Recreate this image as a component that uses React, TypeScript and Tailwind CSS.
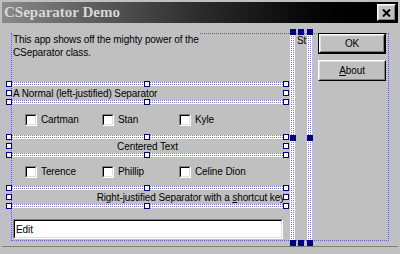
import React from "react";

const hatch = "bg-white bg-[conic-gradient(#7474e0_25%,#ffffff_0)] bg-[length:2px_2px]";

const Handle = ({ className, filled }: { className: string; filled?: boolean }) => (
  <span
    className={`absolute w-[6px] h-[6px] border border-[#000080] ${filled ? "bg-[#000080]" : "bg-white"} ${className}`}
  />
);

const Separator = ({
  justify,
  className,
  children,
}: {
  justify: string;
  className: string;
  children: React.ReactNode;
}) => (
  <div className={`relative ${className}`}>
    <div className={`h-[4px] ${hatch}`} />
    <div className={`h-[14px] flex items-center px-[4px] whitespace-nowrap ${justify}`}>
      <span>{children}</span>
    </div>
    <div className={`h-[4px] ${hatch}`} />
    <Handle className="-top-[1px] -left-[3px]" />
    <Handle className="-top-[1px] left-[135px]" />
    <Handle className="-top-[1px] -right-[3px]" />
    <Handle className="top-[8px] -left-[3px]" />
    <Handle className="top-[8px] -right-[3px]" />
    <Handle className="top-[17px] -left-[3px]" />
    <Handle className="top-[17px] left-[135px]" />
    <Handle className="top-[17px] -right-[3px]" />
  </div>
);

const Check = ({ label }: { label: string }) => (
  <div className="w-[77px] flex items-center gap-[4px]">
    <span className="w-[12px] h-[12px] border border-t-[#808080] border-l-[#808080] border-b-white border-r-white">
      <span className="block w-full h-full border border-t-black border-l-black border-b-[#dfdfdf] border-r-[#dfdfdf] bg-white" />
    </span>
    <span className="leading-[12px]">{label}</span>
  </div>
);

const Button = ({ children, isDefault }: { children: React.ReactNode; isDefault?: boolean }) => (
  <div className={`w-[68px] h-[21px] ${isDefault ? "border border-black" : ""}`}>
    <div className="h-full border border-t-white border-l-white border-r-black border-b-black">
      <div className="h-full border border-t-[#dfdfdf] border-l-[#dfdfdf] border-r-[#808080] border-b-[#808080] flex items-center justify-center bg-[#c0c0c0]">
        {children}
      </div>
    </div>
  </div>
);

export default function App() {
  return (
    <div className="w-[400px] h-[254px] bg-[#c0c0c0] pt-[2px] px-[2px] relative overflow-hidden text-[10px] tracking-[-0.1px] text-black font-['Liberation_Sans',Arial,sans-serif]">
      {/* title bar */}
      <div className="h-[21px] flex items-center justify-between bg-linear-to-r from-[#8a8a8a] via-[#2c2c2c] via-50% to-black pl-[2px] pr-[2px]">
        <span className="font-['Liberation_Serif','Times_New_Roman',serif] font-bold text-[15px] tracking-normal text-[#d8d8d8] leading-[21px]">
          CSeparator Demo
        </span>
        <div className="w-[19px] h-[17px] border border-t-white border-l-white border-r-black border-b-black">
          <div className="h-full border border-t-[#dfdfdf] border-l-[#dfdfdf] border-r-[#808080] border-b-[#808080] bg-[#c0c0c0] flex items-center justify-center">
            <svg width="9" height="8" viewBox="0 0 9 8">
              <path d="M1 0.5 L8 7.5 M8 0.5 L1 7.5" stroke="black" strokeWidth="2" />
            </svg>
          </div>
        </div>
      </div>

      {/* dialog body */}
      <div className="relative flex h-[224px] border-b border-[#808080]">
        {/* group selection rectangle */}
        <div className="absolute left-[9px] top-[10px] w-[378px] h-[208px] border border-dotted border-[#5a5aff]" />

        <div className="relative ml-[7px] w-[277px] flex flex-col">
          <div className="mt-[10px] ml-[3px] pl-[1px] w-[188px] h-[26px] leading-[13px] bg-[#c0c0c0]">
            This app shows off the mighty power of the
            <br />
            CSeparator class.
          </div>

          <Separator justify="justify-start" className="mt-[23px]">
            A Normal (left-justified) Separator
          </Separator>

          <div className="mt-[10px] h-[12px] pl-[16px] flex">
            <Check label="Cartman" />
            <Check label="Stan" />
            <Check label="Kyle" />
          </div>

          <Separator justify="justify-center" className="mt-[9px]">
            Centered Text
          </Separator>

          <div className="mt-[9px] h-[12px] pl-[16px] flex">
            <Check label="Terence" />
            <Check label="Phillip" />
            <Check label="Celine Dion" />
          </div>

          <Separator justify="justify-end !pr-[1px]" className="mt-[8px]">
            Right-justified Separator with a <span className="underline">s</span>hortcut key
          </Separator>

          <div className="mt-[11px] ml-[4px] w-[270px] h-[20px] border border-t-[#808080] border-l-[#808080] border-b-white border-r-white">
            <div className="h-full border border-t-black border-l-black border-b-[#dfdfdf] border-r-[#dfdfdf] bg-white flex items-center pl-[1px]">
              Edit
            </div>
          </div>
        </div>

        {/* vertical separator */}
        <div className="relative ml-[4px] mt-[11px] w-[22px] h-[206px] flex">
          <div className={`w-[5px] h-full ${hatch}`} />
          <div className="w-[12px] h-full pl-[2px] pt-[1px] whitespace-nowrap leading-[12px]">St</div>
          <div className={`w-[5px] h-full ${hatch}`} />
          <Handle filled className="-top-[5px] left-0" />
          <Handle filled className="-top-[5px] left-[8px]" />
          <Handle filled className="-top-[5px] left-[17px]" />
          <Handle filled className="top-[101px] left-0" />
          <Handle filled className="top-[101px] left-[17px]" />
          <Handle filled className="top-[206px] left-0" />
          <Handle filled className="top-[206px] left-[8px]" />
          <Handle filled className="top-[206px] left-[17px]" />
        </div>

        {/* buttons */}
        <div className="relative ml-[6px] mt-[10px] flex flex-col gap-[6px]">
          <Button isDefault>OK</Button>
          <Button>
            <span>
              <span className="underline">A</span>bout
            </span>
          </Button>
        </div>
      </div>
    </div>
  );
}
